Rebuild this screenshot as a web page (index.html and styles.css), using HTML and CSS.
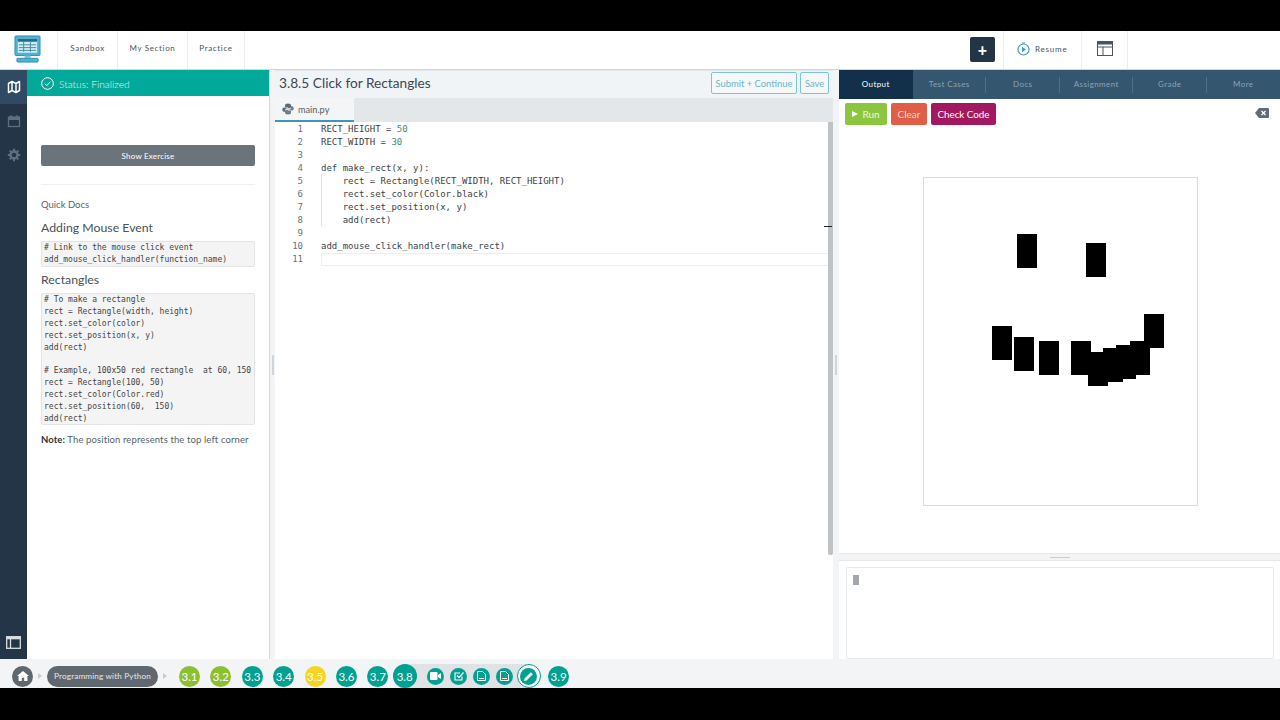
FILE: index.html
```html
<!DOCTYPE html>
<html lang="en">
<head>
<meta charset="utf-8">
<title>3.8.5 Click for Rectangles</title>
<link rel="stylesheet" href="styles.css">
</head>
<body>
<div class="app">
  <header class="topbar">
    <div class="logo">
      <svg width="27" height="28" viewBox="0 0 28 30" preserveAspectRatio="none"><rect x="1" y="1" width="26" height="21" rx="1" fill="#4fb3d0" stroke="#2a8fb3"/><rect x="4" y="4" width="20" height="15" fill="#d5edf3"/><path d="M4 7h20M5 10.500h18M5 13.500h18M5 16.500h18M10 7v11M17 7v11" stroke="#3d8aa5" stroke-width="1"/><path d="M4 4h20v2.500H4z" fill="#1d6f8e"/><rect x="11" y="22" width="6" height="3" fill="#7cc5da"/><rect x="3" y="25" width="22" height="4" rx="1" fill="#4fb3d0" stroke="#2a8fb3"/></svg>
    </div>
    <nav class="nav">
      <a class="nav-item nav-sandbox">Sandbox</a>
      <a class="nav-item nav-section">My Section</a>
      <a class="nav-item nav-practice">Practice</a>
    </nav>
    <div class="top-actions">
      <button class="plus">+</button>
      <div class="resume">
        <svg width="13" height="14" viewBox="0 0 13 14"><circle cx="6.500" cy="7.500" r="5.500" fill="none" stroke="#3d9cc4" stroke-width="1.200"/><path d="M5 4.800l4 2.700-4 2.700z" fill="#3d9cc4"/><path d="M5 1h3" stroke="#3d9cc4"/></svg>
        <span>Resume</span>
      </div>
      <div class="window-btn">
        <svg width="16" height="15" viewBox="0 0 16 15"><rect x=".5" y=".5" width="15" height="14" fill="#fff" stroke="#4a5560"/><rect x="0" y="0" width="16" height="3.500" fill="#4a5560"/><path d="M0 6h16M6 6v9" stroke="#4a5560" fill="none"/></svg>
      </div>
    </div>
  </header>

  <main class="workspace">
    <aside class="rail">
      <div class="rail-item active">
        <svg width="14" height="14" viewBox="0 0 14 14"><path d="M1.500 3.500L5 1.500l4 2 3.500-2v9L9 12.500l-4-2-3.500 2zM5 1.500v9M9 3.500v9" fill="none" stroke="#fff" stroke-width="1.500" stroke-linejoin="round"/></svg>
      </div>
      <div class="rail-item">
        <svg width="14" height="14" viewBox="0 0 14 14"><rect x="1.500" y="3" width="11" height="9.500" fill="none" stroke="#5d6f80" stroke-width="1.300"/><rect x="1.500" y="3" width="11" height="3" fill="#5d6f80"/><path d="M4 1v2.500M10 1v2.500" stroke="#5d6f80" stroke-width="1.300"/></svg>
      </div>
      <div class="rail-item">
        <svg width="14" height="14" viewBox="0 0 14 14"><circle cx="7" cy="7" r="3.500" fill="none" stroke="#5d6f80" stroke-width="2.400"/><path d="M7 .8v2.400M7 10.800v2.400M.8 7h2.400M10.800 7h2.400M2.600 2.600l1.700 1.700M9.700 9.700l1.700 1.700M2.600 11.400l1.700-1.700M9.700 4.300l1.700-1.700" stroke="#5d6f80" stroke-width="2"/></svg>
      </div>
      <div class="rail-spacer"></div>
      <div class="rail-bottom">
        <svg width="15" height="13" viewBox="0 0 15 13"><rect x=".7" y=".7" width="13.600" height="11.600" fill="none" stroke="#d8dee3" stroke-width="1.300"/><rect x=".7" y=".7" width="13.600" height="2.600" fill="#d8dee3"/><path d="M4.500 3v9" stroke="#d8dee3" stroke-width="1.300"/></svg>
      </div>
    </aside>

    <section class="docs">
      <div class="status">
        <svg width="13" height="13" viewBox="0 0 13 13"><circle cx="6.500" cy="6.500" r="5.800" fill="none" stroke="#fff" stroke-width="1"/><path d="M3.800 6.700l2 2 3.500-4" fill="none" stroke="#fff" stroke-width="1"/></svg>
        <span>Status: Finalized</span>
      </div>
      <div class="docs-body">
        <button class="show-ex">Show Exercise</button>
        <hr class="rule">
        <div class="quick">Quick Docs</div>
        <h3 class="doc-h">Adding Mouse Event</h3>
        <pre class="doc-code"># Link to the mouse click event
add_mouse_click_handler(function_name)</pre>
        <h3 class="doc-h doc-h2">Rectangles</h3>
        <pre class="doc-code"># To make a rectangle
rect = Rectangle(width, height)
rect.set_color(color)
rect.set_position(x, y)
add(rect)

# Example, 100x50 red rectangle  at 60, 150
rect = Rectangle(100, 50)
rect.set_color(Color.red)
rect.set_position(60,  150)
add(rect)</pre>
        <p class="note"><b>Note:</b> The position represents the top left corner</p>
      </div>
    </section>

    <div class="split"><i class="grip"></i></div>

    <section class="editor">
      <div class="title-bar">
        <h1>3.8.5 Click for Rectangles</h1>
        <div class="title-actions">
          <button class="ghost">Submit + Continue</button>
          <button class="ghost">Save</button>
        </div>
      </div>
      <div class="tabs-bar">
        <div class="file-tab">
          <svg width="12" height="12" viewBox="0 0 12 12"><path d="M6 .5c-2.500 0-3 1-3 2V4h3.200v.5H2C.8 4.500.3 5.500.3 6.500S.8 8.700 2 8.700h1V7.300c0-1 .8-2 2-2h2.500c1 0 1.500-.7 1.500-1.500V2.500C9 1.200 8 .5 6 .5z" fill="#5a6b78"/><path d="M6 11.500c2.500 0 3-1 3-2V8H5.800v-.5H10c1.200 0 1.700-1 1.700-2S11.200 3.300 10 3.300H9v1.400c0 1-.8 2-2 2H4.500C3.500 6.700 3 7.400 3 8.200v1.300c0 1.300 1 2 3 2z" fill="#6d7d89"/></svg>
          <span>main.py</span>
        </div>
      </div>
      <div class="code-area">
        <div class="code-main">
          <div class="gutter">1
2
3
4
5
6
7
8
9
10
11</div>
          <div class="code"><div class="ln">RECT_HEIGHT = <span class="num">50</span></div><div class="ln">RECT_WIDTH = <span class="num">30</span></div><div class="ln"> </div><div class="ln"><span class="kw">def</span> make_rect(x, y):</div><div class="ln">    rect = Rectangle(RECT_WIDTH, RECT_HEIGHT)</div><div class="ln">    rect.set_color(Color.black)</div><div class="ln">    rect.set_position(x, y)</div><div class="ln">    add(rect)</div><div class="ln"> </div><div class="ln">add_mouse_click_handler(make_rect)</div><div class="ln ln-active"> </div></div>
          <i class="guide"></i>
          <i class="tick"></i>
        </div>
        <div class="scrollbar"><i class="thumb"></i></div>
      </div>
    </section>

    <div class="split split-r"><i class="grip"></i></div>

    <section class="right">
      <div class="right-tabs">
        <div class="rtab on">Output</div>
        <div class="rtab">Test Cases</div>
        <div class="rtab">Docs</div>
        <div class="rtab">Assignment</div>
        <div class="rtab">Grade</div>
        <div class="rtab last">More</div>
      </div>
      <div class="run-row">
        <button class="btn run"><span class="tri"></span>Run</button>
        <button class="btn clear">Clear</button>
        <button class="btn check">Check Code</button>
        <svg class="erase" width="14" height="10" viewBox="0 0 14 10"><path d="M4 0h9a1 1 0 0 1 1 1v8a1 1 0 0 1-1 1H4L0 5z" fill="#5f6b75"/><path d="M6.500 3l4 4M10.500 3l-4 4" stroke="#fff" stroke-width="1.300"/></svg>
      </div>
      <div class="stage">
        <div class="canvas">
          <i class="r r1"></i><i class="r r2"></i><i class="r r3"></i><i class="r r4"></i><i class="r r5"></i><i class="r r6"></i><i class="r r7"></i><i class="r r8"></i><i class="r r9"></i><i class="r r10"></i><i class="r r11"></i>
        </div>
      </div>
      <div class="hsplit"><i></i></div>
      <div class="console-wrap"><div class="console"><i class="cursor"></i></div></div>
    </section>
  </main>

  <footer class="crumbs">
    <div class="home">
      <svg width="12" height="10" viewBox="0 0 12 10"><path d="M6 0L0 5h1.600v5h3.200V6.800h2.400V10h3.200V5H12z" fill="#fff"/></svg>
    </div>
    <i class="arrow"></i>
    <div class="course">Programming with Python</div>
    <i class="arrow"></i>
    <div class="units">
      <div class="dot green">3.1</div>
      <div class="dot green">3.2</div>
      <div class="dot teal">3.3</div>
      <div class="dot teal">3.4</div>
      <div class="dot yellow">3.5</div>
      <div class="dot teal">3.6</div>
      <div class="dot teal">3.7</div>
      <div class="lessons">
        <div class="dot teal big">3.8</div>
        <div class="dot teal small"><svg width="11" height="8" viewBox="0 0 11 8"><rect width="7.500" height="8" rx="1" fill="#fff"/><path d="M8 3l3-2v6L8 5z" fill="#fff"/></svg></div>
        <div class="dot teal small"><svg width="10" height="10" viewBox="0 0 10 10"><path d="M8 5.500V9H1V2h5" fill="none" stroke="#fff" stroke-width="1.100"/><path d="M3 4.500l2 2L9.500 1.500" fill="none" stroke="#fff" stroke-width="1.300"/></svg></div>
        <div class="dot teal small"><svg width="9" height="10" viewBox="0 0 9 10"><path d="M.5.500h5l3 3v6h-8zM2 7.500h5" fill="none" stroke="#fff"/></svg></div>
        <div class="dot teal small"><svg width="9" height="10" viewBox="0 0 9 10"><path d="M.5.500h5l3 3v6h-8zM2 7.500h5" fill="none" stroke="#fff"/></svg></div>
        <div class="ring"><div class="dot teal small"><svg width="11" height="11" viewBox="0 0 11 11"><path d="M1 10l.6-2.600L7.800 1.200l2 2L3.600 9.400z" fill="#fff"/></svg></div></div>
      </div>
      <div class="dot teal">3.9</div>
    </div>
  </footer>
</div>
</body>
</html>
```

FILE: styles.css
```css
* { box-sizing: border-box; }
html, body { margin: 0; height: 100%; }
body { background: #000; font-family: Lato, "Open Sans", sans-serif; color: #4a5560; overflow: hidden; }
i { display: block; font-style: normal; }
button { font-family: inherit; cursor: pointer; }

.app { width: 1280px; height: 720px; padding: 31px 0 32px; display: flex; flex-direction: column; }

/* top bar */
.topbar { height: 39px; flex: none; background: #fff; display: flex; align-items: stretch; border-bottom: 1px solid #cfd5da; }
.logo { width: 57px; display: flex; align-items: center; justify-content: center; padding: 0 3px 2px 0; }
.nav { display: flex; }
.nav-item { border-left: 1px solid #eceef0; display: flex; align-items: center; justify-content: center; font-size: 8px; letter-spacing: .65px; color: #4a5560; padding-bottom: 4px; }
.nav-sandbox { width: 60px; }
.nav-section { width: 70px; }
.nav-practice { width: 58px; border-right: 1px solid #eceef0; }
.top-actions { margin-left: auto; margin-right: 152px; display: flex; align-items: stretch; }
.plus { width: 25px; height: 25px; margin: 6px 8px 0 0; background: #243447; color: #fff; border: 0; border-radius: 2px; font-size: 16px; font-weight: 900; line-height: 23px; padding: 0; }
.resume { width: 78px; border-left: 1px solid #eceef0; display: flex; align-items: center; gap: 5px; padding: 0 0 2px 13px; font-size: 8px; letter-spacing: .8px; color: #4a5560; }
.window-btn { width: 47px; border-left: 1px solid #eceef0; border-right: 1px solid #eceef0; display: flex; align-items: center; justify-content: center; padding-bottom: 4px; }

/* workspace */
.workspace { flex: 1; min-height: 0; display: flex; background: #fff; }
.rail { width: 27px; flex: none; background: #253548; display: flex; flex-direction: column; }
.rail-item { height: 34px; display: flex; align-items: center; justify-content: center; padding-bottom: 1px; }
.rail-item.active { background: #2f4a62; }
.rail-spacer { flex: 1; }
.rail-bottom { height: 34px; display: flex; align-items: center; justify-content: center; }

.docs { width: 243px; flex: none; border-right: 1px solid #d5d9dd; }
.status { height: 26px; background: #00a99a; color: #e4f6f4; display: flex; align-items: center; gap: 5px; padding-left: 14px; font-size: 10.200px; font-weight: 300; }
.status span { padding-top: 1px; }
.docs-body { padding: 49px 14px 0; }
.show-ex { display: block; width: 214px; height: 21px; background: #6c747b; color: #fff; border: 0; border-radius: 2px; font-size: 8px; letter-spacing: .2px; padding: 0; }
.rule { border: 0; border-top: 1px solid #eef0f2; margin: 18px 0 0; }
.quick { font-size: 9.500px; line-height: 12px; margin-top: 14px; color: #59636c; }
.doc-h { font-size: 12.300px; font-weight: 400; line-height: 16px; margin: 9px 0 5px; color: #4a5157; }
.doc-h2 { margin-top: 5px; margin-bottom: 5px; }
.doc-code { margin: 0; background: #f4f4f4; border: 1px solid #e2e4e6; border-radius: 2px; padding: .300px 2px 0; font-family: "DejaVu Sans Mono", monospace; font-size: 8px; line-height: 11.830px; color: #444; overflow: hidden; }
.note { margin: 9px 0 0; font-size: 9.500px; line-height: 12px; letter-spacing: .11px; color: #555f68; }
.note b { color: #333; }

.split { width: 5px; flex: none; background: #f2f4f6; display: flex; align-items: center; justify-content: center; }
.split .grip { width: 2px; height: 20px; background: #cfd5da; }
.split-r { width: 6px; }

/* editor */
.editor { width: 558px; flex: none; display: flex; flex-direction: column; min-height: 0; }
.title-bar { height: 28px; flex: none; background: #f1f4f6; display: flex; align-items: center; justify-content: space-between; padding: 0 4px 3px; border-top: 1px solid #e3e6e9; }
.title-bar h1 { margin: 0 0 1px; font-size: 13.700px; font-weight: 400; color: #3d4750; }
.title-actions { display: flex; gap: 3px; }
.ghost { height: 22px; padding: 0 3.800px; background: #f4f8f9; border: 1px solid #7fc4d2; border-radius: 2px; color: #6fb6c6; font-size: 9.400px; }
.tabs-bar { height: 24px; flex: none; background: #e3e7ea; display: flex; }
.file-tab { width: 79px; background: #f3f5f6; border-bottom: 2px solid #3d96b8; display: flex; align-items: center; gap: 4px; padding-left: 7px; font-size: 9.200px; color: #56616a; }
.code-area { flex: 1; min-height: 0; display: flex; }
.code-main { flex: 1; min-width: 0; display: flex; align-items: flex-start; position: relative; padding-top: 1px; }
.gutter { width: 28px; flex: none; text-align: right; white-space: pre; font-family: "DejaVu Sans Mono", monospace; font-size: 9px; line-height: 13px; color: #66727c; }
.code { flex: 1; margin-left: 18px; font-family: "DejaVu Sans Mono", monospace; font-size: 9px; line-height: 13px; color: #3b4249; }
.ln { white-space: pre; height: 13px; }
.ln-active { border: 1px solid #eceeef; border-right: 0; }
.kw { color: #24506b; }
.num { color: #3d8c82; }
.guide { position: absolute; left: 46px; top: 52px; width: 1px; height: 52px; background: #dfe2e5; }
.tick { position: absolute; right: -4px; top: 104px; width: 8px; height: 1px; background: #222; }
.scrollbar { width: 5px; flex: none; background: #fff; }
.thumb { width: 5px; height: 433px; background: #bfc3c6; border-radius: 0 0 2px 2px; }

/* right */
.right { flex: 1; min-width: 0; display: flex; flex-direction: column; }
.right-tabs { height: 29px; flex: none; background: #34566f; display: grid; grid-template-columns: repeat(6, 1fr); align-items: center; }
.rtab { height: 100%; display: flex; align-items: center; justify-content: center; padding-bottom: 1px; font-size: 8px; letter-spacing: .4px; color: #8ba3b4; position: relative; }
.rtab::after { content: ""; position: absolute; right: 0; top: 7px; height: 16px; width: 1px; background: #4f7088; }
.rtab.last::after { display: none; }
.rtab.on { background: #12304a; color: #fff; }
.rtab.on::after { display: none; }
.run-row { height: 30px; flex: none; display: flex; align-items: center; gap: 4px; padding: 0 0 0 6px; position: relative; }
.btn { height: 22px; border: 0; border-radius: 2px; color: #fff; font-size: 10px; padding: 0; display: flex; align-items: center; justify-content: center; }
.run { width: 42px; background: #8cc63f; color: #eef7e0; }
.tri { width: 0; height: 0; border-left: 6px solid #fff; border-top: 3.500px solid transparent; border-bottom: 3.500px solid transparent; margin-right: 4px; }
.clear { width: 36px; background: #e05d47; color: #f9d9d3; }
.check { width: 65px; background: #a3185f; font-size: 9.800px; }
.erase { position: absolute; right: 11px; top: 9px; }
.stage { flex: 1; min-height: 0; display: flex; justify-content: center; padding: 48px 0 0 2px; }
.canvas { width: 275px; height: 329px; background: #fff; border: 1px solid #d9dcdf; position: relative; }
.r { position: absolute; width: 20px; height: 34px; background: #000; }
.r1 { left: 93px; top: 56px; }
.r2 { left: 162px; top: 65px; }
.r3 { left: 68px; top: 148px; }
.r4 { left: 90px; top: 159px; }
.r5 { left: 115px; top: 163px; }
.r6 { left: 147px; top: 163px; }
.r7 { left: 164px; top: 174px; }
.r8 { left: 179px; top: 170px; }
.r9 { left: 192px; top: 167px; }
.r10 { left: 206px; top: 163px; }
.r11 { left: 220px; top: 136px; }
.hsplit { height: 8px; flex: none; background: #f2f4f6; border-top: 1px solid #e6e9eb; border-bottom: 1px solid #e6e9eb; display: flex; align-items: center; justify-content: center; }
.hsplit i { width: 20px; height: 1px; background: #c9ced2; }
.console-wrap { height: 98px; flex: none; padding: 6px 6px 0 7px; }
.console { height: 92px; border: 1px solid #e6e8ea; border-radius: 2px; padding: 7px 6px; }
.cursor { width: 6px; height: 10px; background: #a3a7ab; }

/* footer */
.crumbs { height: 29px; flex: none; background: #f2f4f5; display: flex; align-items: center; padding: 5px 0 0 12px; }
.home { width: 21px; height: 21px; border-radius: 50%; background: #5f676f; display: flex; align-items: center; justify-content: center; }
.arrow { width: 0; height: 0; border-left: 4px solid #c8cdd1; border-top: 3px solid transparent; border-bottom: 3px solid transparent; margin: 0 5px; }
.course { width: 111px; height: 21px; border-radius: 11px; background: #5f676f; color: #e5e8ea; font-size: 8.200px; letter-spacing: .15px; display: flex; align-items: center; justify-content: center; }
.units { display: flex; align-items: center; gap: 10.400px; margin-left: 7px; }
.dot { width: 21px; height: 21px; border-radius: 50%; display: flex; align-items: center; justify-content: center; color: #fff; font-size: 11.500px; flex: none; }
.green { background: #8dbf32; }
.teal { background: #00a191; }
.yellow { background: #f7d51d; }
.lessons { display: flex; align-items: center; gap: 6px; height: 24px; background: #dfe3e6; border-radius: 12px; margin-left: -6px; margin-right: -3px; }
.big { width: 24px; height: 24px; margin-right: 4.500px; }
.small { width: 17px; height: 17px; }
.ring { width: 24px; height: 24px; border-radius: 50%; border: 1.500px solid #00a191; background: #fff; display: flex; align-items: center; justify-content: center; margin-left: -2.500px; }
.ring .dot { width: 17px; height: 17px; }
```
